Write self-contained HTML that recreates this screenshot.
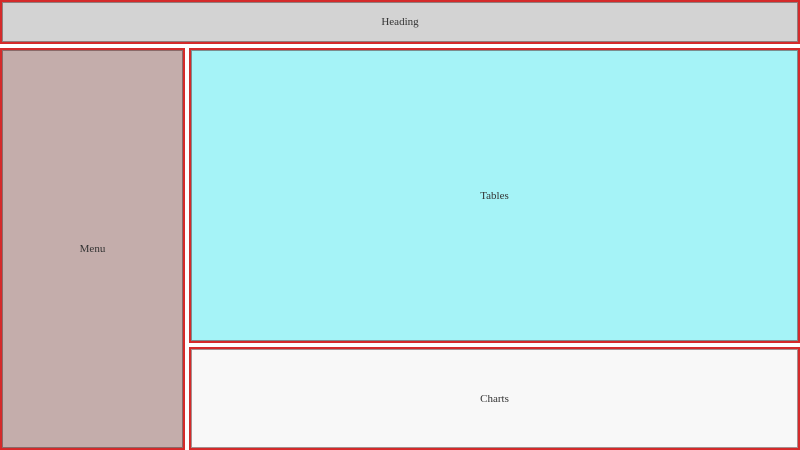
<!DOCTYPE html>
<html><head><style>
html,body{margin:0;padding:0;width:800px;height:450px;overflow:hidden;background:#fff;}
.b{position:absolute;box-sizing:border-box;border:2px solid #d42a2a;display:flex;align-items:center;justify-content:center;font-family:"Liberation Serif",serif;font-size:11px;color:#333;box-shadow:inset 0 0 0 1px rgba(80,40,40,0.5);}
</style></head><body>
<div class="b" style="left:0;top:0;width:800px;height:44px;background:#d3d3d3;">Heading</div>
<div class="b" style="left:0;top:48px;width:185px;height:402px;background:#c4adab;">Menu</div>
<div class="b" style="left:189px;top:48px;width:611px;height:295px;background:#a5f3f7;">Tables</div>
<div class="b" style="left:189px;top:347px;width:611px;height:103px;background:#f8f8f8;">Charts</div>
</body></html>
